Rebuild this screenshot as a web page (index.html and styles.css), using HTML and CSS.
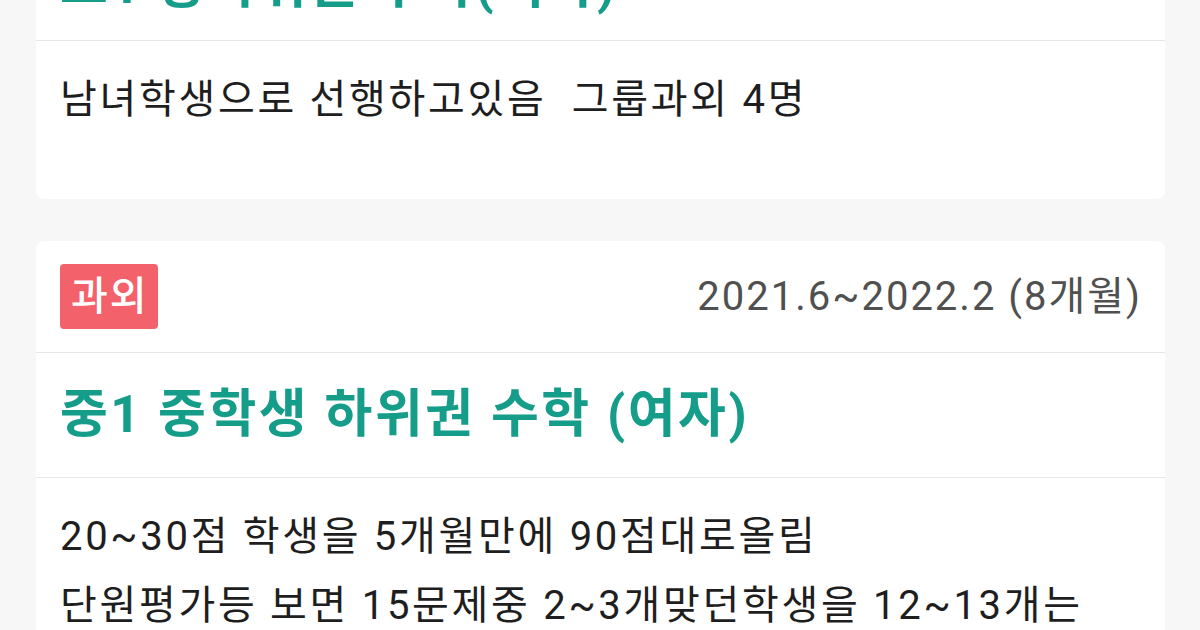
FILE: index.html
```html
<!DOCTYPE html>
<html lang="ko">
<head>
<meta charset="utf-8">
<link rel="stylesheet" href="styles.css">
</head>
<body>
<div class="page">
  <div class="card card-first">
    <div class="title-row title-row-first"><h2 class="title">고1 중하위권 수학(여자)</h2></div>
    <div class="body body-first">
      <p class="line">남녀학생으로 선행하고있음&nbsp; 그룹과외 4명</p>
    </div>
  </div>
  <div class="card">
    <div class="head-row">
      <span class="badge">과외</span>
      <span class="date">2021.6~2022.2 (8개월)</span>
    </div>
    <div class="title-row"><h2 class="title">중1 중학생 하위권 수학 (여자)</h2></div>
    <div class="body">
      <p class="line">20~30점 학생을 5개월만에 90점대로올림</p>
      <p class="line">단원평가등 보면 15문제중 2~3개맞던학생을 12~13개는</p>
    </div>
  </div>
</div>
</body>
</html>
```
FILE: styles.css
```css
* { box-sizing: border-box; }
html, body {
  margin: 0;
  padding: 0;
  background: #f7f7f7;
  width: 1200px;
  height: 630px;
  overflow: hidden;
  font-family: Roboto, "Noto Sans CJK KR", sans-serif;
}
.page {
  padding: 0 35px 0 36px;
  display: flex;
  flex-direction: column;
  gap: 42px;
}
.card {
  background: #ffffff;
  border-radius: 8px;
}
.card-first {
  margin-top: -84px;
}
.head-row {
  height: 112px;
  display: flex;
  align-items: center;
  justify-content: space-between;
  padding: 0 23px 0 24px;
  border-bottom: 1px solid #e6e6e6;
}
.badge {
  background: #f3626b;
  color: #ffffff;
  font-size: 40px;
  font-weight: 500;
  letter-spacing: 2px;
  line-height: 65px;
  height: 65px;
  padding: 0 9px 0 11px;
  border-radius: 4px;
}
.date {
  font-size: 40px;
  color: #505050;
  letter-spacing: 2px;
  line-height: 1;
}
.title-row {
  height: 125px;
  display: flex;
  align-items: center;
  padding: 0 24px;
  border-bottom: 1px solid #e6e6e6;
}
.title-row-first {
  padding-top: 16px;
}
.title {
  margin: 0;
  font-size: 52px;
  font-weight: 700;
  color: #169d8a;
  letter-spacing: 2.5px;
  line-height: 1;
}
.body {
  padding: 24px 24px 0;
}
.body-first {
  padding-bottom: 65px;
}
.line {
  margin: 0;
  font-size: 40px;
  line-height: 69px;
  color: #1e1e1e;
  letter-spacing: 2.7px;
  white-space: nowrap;
}
```
